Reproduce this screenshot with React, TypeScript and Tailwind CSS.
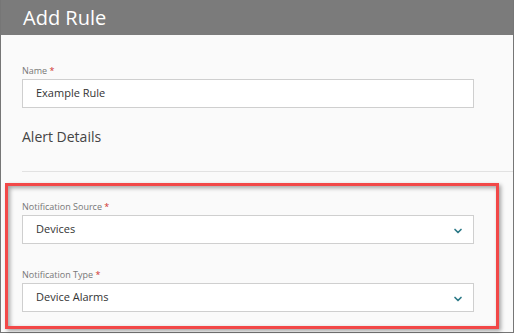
import { ChevronDown } from 'lucide-react'

function Label({ text }: { text: string }) {
  return (
    <div className="mb-[2px] text-[9px] leading-[12px] text-[#777]">
      {text} <span className="text-[#d0312d]">*</span>
    </div>
  )
}

function Select({ value }: { value: string }) {
  return (
    <div className="flex h-[29px] w-[452px] items-center justify-between border border-[#cfcfcf] bg-white pl-[13px] pr-[9px]">
      <span className="text-[11px] text-[#333]">{value}</span>
      <ChevronDown size={12} strokeWidth={3.4} className="mt-[3px] text-[#2d7a88]" />
    </div>
  )
}

export default function App() {
  return (
    <div className="relative h-[334px] w-[516px] bg-white font-['Open_Sans',sans-serif]">
      <div className="flex h-[333px] w-[514px] flex-col border-b border-l border-r border-[#767676] bg-[#fafafa]">
        <div className="h-[35px] bg-[#7b7b7b] pl-[22px] text-[20px] leading-[35px] text-white">
          Add Rule
        </div>
        <div className="flex flex-col pl-[21px] pt-[30px]">
          <Label text="Name" />
          <div className="flex h-[29px] w-[452px] items-center border border-[#cfcfcf] bg-white pl-[13px] text-[11px] text-[#333]">
            Example Rule
          </div>
          <div className="mt-[19px] text-[14px] leading-[20px] text-[#444]">Alert Details</div>
          <div className="mt-[24px] h-px bg-[#e2e2e2]" />
          <div className="mt-[29px]">
            <Label text="Notification Source" />
            <Select value="Devices" />
          </div>
          <div className="mt-[25px]">
            <Label text="Notification Type" />
            <Select value="Device Alarms" />
          </div>
        </div>
      </div>
      <div className="pointer-events-none absolute left-[5px] top-[183px] h-[146px] w-[494px] border-[3px] border-[#f24848] shadow-[2px_2px_4px_rgba(0,0,0,0.35),inset_2px_2px_4px_rgba(0,0,0,0.35)]" />
    </div>
  )
}
